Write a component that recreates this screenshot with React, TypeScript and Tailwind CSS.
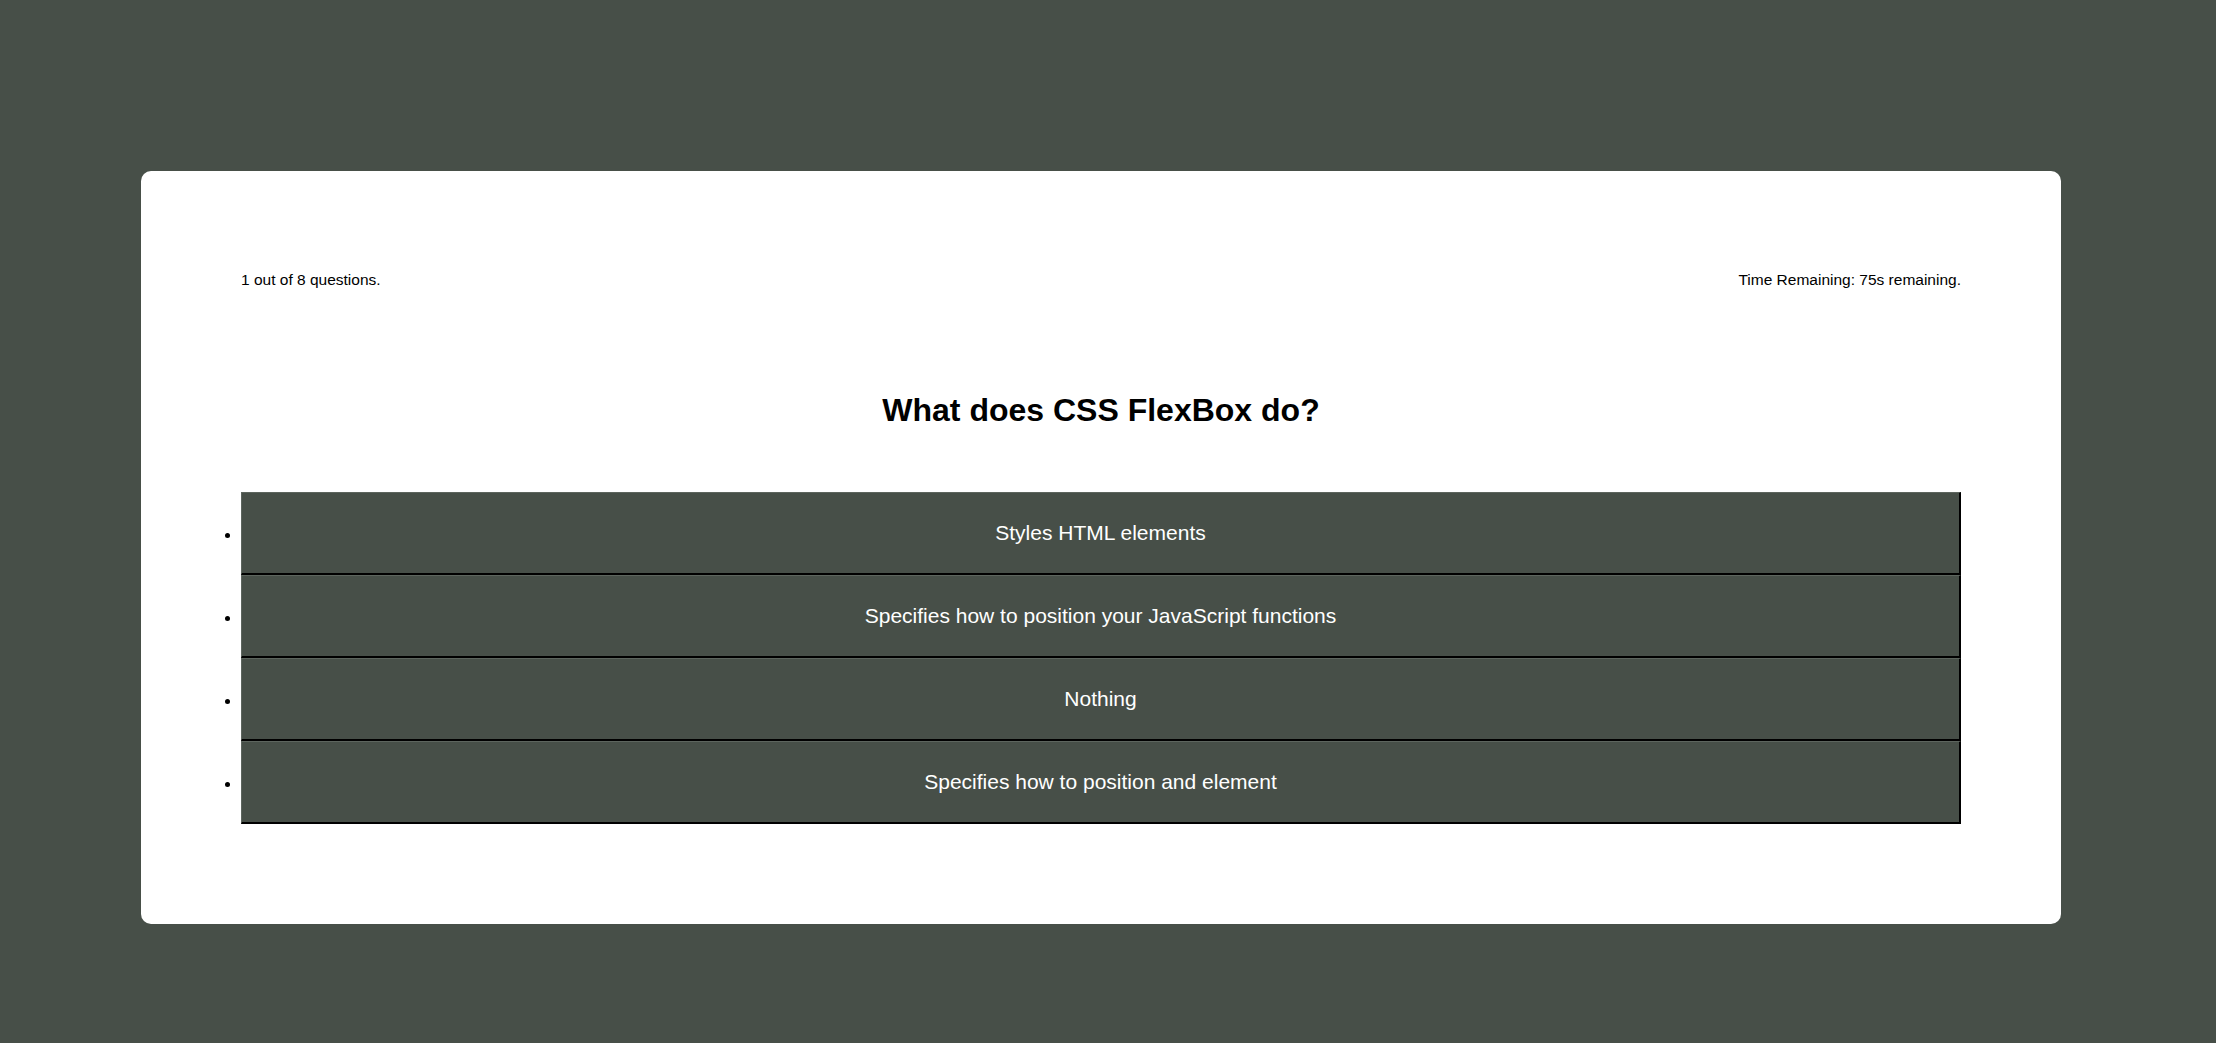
const answers = [
  "Styles HTML elements",
  "Specifies how to position your JavaScript functions",
  "Nothing",
  "Specifies how to position and element",
];

export default function App() {
  return (
    <div className="min-h-[1043px] w-full bg-[#474f48] pt-[171px] pl-[141px] font-['Liberation_Sans',Arial,sans-serif]">
      <div className="w-[1920px] rounded-[10px] bg-white px-[100px] pt-[100px] pb-[100px]">
        <div className="flex justify-between text-[15.5px] leading-[18px] text-black">
          <span>1 out of 8 questions.</span>
          <span>Time Remaining: 75s remaining.</span>
        </div>
        <h1 className="mt-[103px] text-center text-[32px] font-bold leading-[37px] text-black">
          What does CSS FlexBox do?
        </h1>
        <ul className="mt-[63px] list-disc text-[15px] text-black">
          {answers.map((a) => (
            <li key={a}>
              <button className="flex h-[83px] w-full items-center justify-center border-t border-l border-t-[#5d655e] border-l-[#5d655e] border-b-2 border-r-2 border-b-black border-r-black bg-[#474f48] text-[21px] text-white">
                {a}
              </button>
            </li>
          ))}
        </ul>
      </div>
    </div>
  );
}
